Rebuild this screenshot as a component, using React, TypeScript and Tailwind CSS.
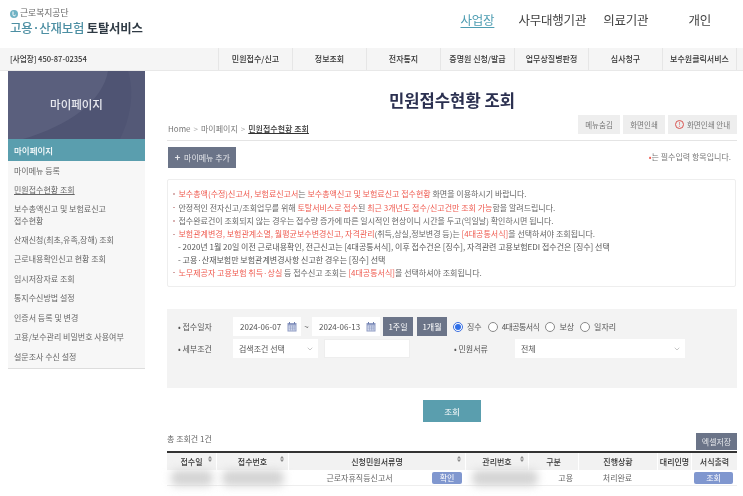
import { ChevronDown, Plus } from "lucide-react";

const font = { fontFamily: '"Noto Sans CJK KR", "Noto Sans", sans-serif' };

const navItems = ["민원접수/신고", "정보조회", "전자통지", "증명원 신청/발급", "업무상질병판정", "심사청구", "보수원클릭서비스"];

const sideItems = [
  "마이메뉴 등록",
  "민원접수현황 조회",
  "보수총액신고 및 보험료신고\n접수현황",
  "산재신청(최초,유족,장해) 조회",
  "근로내용확인신고 현황 조회",
  "임시저장자료 조회",
  "통지수신방법 설정",
  "인증서 등록 및 변경",
  "고용/보수관리 비밀번호 사용여부",
  "설문조사 수신 설정",
];

const R = ({ children }: { children: React.ReactNode }) => <span className="text-[#ef5b50]">{children}</span>;

const Bullet = ({ children }: { children: React.ReactNode }) => (
  <li className="flex items-center h-[13.4px] whitespace-nowrap">
    <span className="w-[1.5px] h-[1.5px] rounded-full bg-[#c99] mr-[4px] shrink-0" />
    <span>{children}</span>
  </li>
);

const CalendarIcon = () => (
  <svg width="10" height="10" viewBox="0 0 10 10" className="shrink-0">
    <rect x="0.5" y="1" width="9" height="8.5" fill="#8f9cc4" />
    <rect x="2" y="0" width="1" height="2" fill="#6f7fae" />
    <rect x="7" y="0" width="1" height="2" fill="#6f7fae" />
    <rect x="1.5" y="3.5" width="7" height="5" fill="#dfe4f2" />
    <path d="M1.5 5h7M1.5 6.8h7M3.5 3.5v5M5.5 3.5v5M7.2 3.5v5" stroke="#8f9cc4" strokeWidth="0.6" />
  </svg>
);

const Radio = ({ checked, label, tight }: { checked?: boolean; label: string; tight?: boolean }) => (
  <span className="flex items-center gap-[4px]">
    <span className={`w-[10px] h-[10px] rounded-full border flex items-center justify-center bg-white ${checked ? "border-[#3b6fe0]" : "border-[#8a8a8a]"}`}>
      {checked && <span className="w-[6px] h-[6px] rounded-full bg-[#2f6fe8]" />}
    </span>
    <span className={tight ? "tracking-[-0.6px]" : ""}>{label}</span>
  </span>
);

const SortHead = ({ className, children, sort = true }: { className: string; children: React.ReactNode; sort?: boolean }) => (
  <div className={`relative flex items-center justify-center h-full bg-[#f2f2f2] font-medium text-[#333] ${className}`}>
    {children}
    {sort && (
      <svg width="4" height="6" viewBox="0 0 4 6" className="absolute right-[4px] top-[3px]">
        <path d="M2 0l2 2.4H0zM2 6L0 3.6h4z" fill="#888" />
      </svg>
    )}
  </div>
);

const Blurred = ({ className }: { className: string }) => (
  <div className={`h-full flex items-center justify-center bg-white ${className}`}>
    <div className="w-[85%] h-[16px] bg-[#d4d4d4] rounded-md blur-[4px]" />
  </div>
);

export default function App() {
  return (
    <div style={font} className="w-[743px] h-[496px] overflow-hidden bg-white text-[#555] text-[8.5px] [filter:blur(0.35px)]">
      <header className="h-[48px] flex justify-between">
        <div className="pl-[10px] pt-[7px]">
          <div className="flex items-center gap-[2px] h-[13px] text-[8.8px] leading-none text-[#666]">
            <svg width="8" height="8" viewBox="0 0 8 8">
              <circle cx="4" cy="4" r="4" fill="#6fb2c4" />
              <path d="M3 1.5v3.2a1.2 1.2 0 0 0 2.4 0" stroke="#fff" fill="none" strokeWidth="1" />
            </svg>
            근로복지공단
          </div>
          <div className="text-[12.4px] leading-[16px] font-medium text-[#4d8fa3] tracking-[-0.2px] whitespace-nowrap">
            고용·산재보험 <span className="text-[#2f3a44] font-semibold">토탈서비스</span>
          </div>
        </div>
        <nav className="flex items-start pt-[11px] text-[12.5px] leading-[17px] text-[#444] whitespace-nowrap tracking-[-0.2px]">
          <a className="text-[#4e9db2] underline underline-offset-2">사업장</a>
          <a className="ml-[24px]">사무대행기관</a>
          <a className="ml-[17px]">의료기관</a>
          <a className="ml-[40px] mr-[32px]">개인</a>
        </nav>
      </header>

      <div className="h-[23px] bg-[#f5f5f5] border-b border-[#e8e8e8] flex items-center">
        <div className="w-[218px] pl-[10px] text-[7.6px] text-[#333] font-medium whitespace-nowrap">[사업장] 450-87-02354</div>
        {navItems.map(n => (
          <div key={n} className="w-[74px] h-full flex items-center justify-center border-l border-[#e6e6e6] text-[8px] font-medium text-[#333] whitespace-nowrap">{n}</div>
        ))}
        <div className="w-[7px] h-full border-l border-[#e6e6e6]" />
      </div>

      <div className="flex">
        <aside className="w-[137px] ml-[8px] shrink-0">
          <div className="relative h-[68px] bg-[#4f5473] flex items-center justify-center overflow-hidden">
            <svg className="absolute inset-0" width="137" height="68" viewBox="0 0 137 68">
              <path d="M0 0h100c-5 30-40 55-85 68H0z" fill="#5a5f7d" />
              <path d="M120 0h17v68h-25c10-20 15-45 8-68z" fill="#545977" />
            </svg>
            <span className="relative text-[11.5px] font-medium text-[#e8e9ef]">마이페이지</span>
          </div>
          <div className="h-[22px] bg-[#5a9eae] flex items-center pl-[6px] text-[8.5px] font-medium text-white">마이페이지</div>
          <ul className="bg-[#f7f7f7] border-b border-[#ddd] pl-[6px] pb-[1px] text-[8px] text-[#666]">
            {sideItems.map(s => (
              <li key={s} className={`flex items-center whitespace-pre-line leading-[12px] ${s.includes("\n") ? "h-[30px]" : "h-[19.5px]"}`}>
                <span className={s === "민원접수현황 조회" ? "underline underline-offset-1" : ""}>{s}</span>
              </li>
            ))}
          </ul>
        </aside>

        <main className="ml-[22px] w-[570px]">
          <h1 className="pt-[18px] h-[44px] text-center text-[16.6px] leading-[22px] font-bold text-[#2b3050] whitespace-nowrap">민원접수현황 조회</h1>
          <div className="h-[26px] flex items-start justify-between border-b border-[#e4e4e4]">
            <div className="flex items-center gap-[3px] h-[25px] pt-[2px] pl-[1px] text-[8px] text-[#777] whitespace-nowrap">
              <span>Home</span><span className="text-[#aaa]">&gt;</span><span>마이페이지</span><span className="text-[#aaa]">&gt;</span>
              <span className="font-medium text-[#333] underline underline-offset-1">민원접수현황 조회</span>
            </div>
            <div className="flex gap-[3px] text-[7.5px] text-[#777]">
              <button className="w-[42px] h-[19px] bg-[#eee]">메뉴숨김</button>
              <button className="w-[42px] h-[19px] bg-[#eee]">화면인쇄</button>
              <button className="w-[69px] h-[19px] bg-[#eee] flex items-center justify-center gap-[3px]">
                <span className="w-[9px] h-[9px] rounded-full border border-[#d9534f] text-[#d9534f] text-[7px] leading-none flex items-center justify-center">!</span>
                화면인쇄 안내
              </button>
            </div>
          </div>
          <div className="flex justify-between mt-[6px]">
            <button className="ml-[1px] w-[68px] h-[21px] bg-[#6b7488] text-[#e4e6ea] text-[8px] flex items-center justify-center gap-[3px]">
              <Plus size={7} strokeWidth={4} />마이메뉴 추가
            </button>
            <div className="pt-[4px] pr-[6px] text-[8px] text-[#777]"><span className="text-[#ef5b50]">•</span>는 필수입력 항목입니다.</div>
          </div>

          <ul className="mt-[11px] h-[108px] w-[569px] border border-[#eee] rounded-[2px] pt-[7.5px] pl-[5px] text-[8px] text-[#666] overflow-hidden">
            <Bullet><R>보수총액(수정)신고서, 보험료신고서</R>는 <R>보수총액신고 및 보험료신고 접수현황</R> 화면을 이용하시기 바랍니다.</Bullet>
            <Bullet>안정적인 전자신고/조회업무를 위해 <R>토탈서비스로 접수</R>된 <R>최근 3개년도 접수/신고건만 조회 가능</R>함을 알려드립니다.</Bullet>
            <Bullet>접수완료건이 조회되지 않는 경우는 접수량 증가에 따른 일시적인 현상이니 시간을 두고(익일날) 확인하시면 됩니다.</Bullet>
            <Bullet><R>보험관계변경, 보험관계소멸, 월평균보수변경신고, 자격관리</R>(취득,상실,정보변경 등)는 <R>[4대공통서식]</R>을 선택하셔야 조회됩니다.</Bullet>
            <li className="h-[12.4px] flex items-center whitespace-nowrap text-[#555] pl-[5px]">- 2020년 1월 20일 이전 근로내용확인, 전근신고는 [4대공통서식], 이후 접수건은 [징수], 자격관련 고용보험EDI 접수건은 [징수] 선택</li>
            <li className="h-[12.4px] flex items-center whitespace-nowrap text-[#555] pl-[5px]">- 고용·산재보험만 보험관계변경사항 신고한 경우는 [징수] 선택</li>
            <Bullet><R>노무제공자 고용보험 취득·상실</R> 등 접수신고 조회는 <R>[4대공통서식]</R>을 선택하셔야 조회됩니다.</Bullet>
          </ul>

          <section className="mt-[22px] h-[79px] w-[570px] bg-[#f3f3f3] pt-[8px] pl-[11px] text-[8px] text-[#555]">
            <div className="flex items-center h-[19px]">
              <span className="w-[55px]">• 접수일자</span>
              <span className="w-[68px] h-[19px] bg-white flex items-center justify-between pl-[7px] pr-[4px]">2024-06-07 <CalendarIcon /></span>
              <span className="w-[11px] text-center">~</span>
              <span className="w-[68px] h-[19px] bg-white flex items-center justify-between pl-[7px] pr-[4px]">2024-06-13 <CalendarIcon /></span>
              <span className="ml-[3px] w-[30px] h-[19px] bg-[#6b7488] text-white flex items-center justify-center">1주일</span>
              <span className="ml-[4px] w-[30px] h-[19px] bg-[#6b7488] text-white flex items-center justify-center">1개월</span>
              <span className="ml-[6px] flex gap-[6px]">
                <Radio checked label="징수" />
                <Radio label="4대공통서식" tight />
                <Radio label="보상" />
                <Radio label="일자리" />
              </span>
            </div>
            <div className="flex items-center h-[19px] mt-[3px]">
              <span className="w-[55px]">• 세부조건</span>
              <span className="w-[85px] h-[19px] bg-white flex items-center justify-between pl-[6px] pr-[4px]">검색조건 선택 <ChevronDown size={8} className="text-[#aaa]" /></span>
              <span className="ml-[6px] w-[86px] h-[19px] bg-white border border-[#eee]" />
              <span className="ml-[44px] w-[61px]">• 민원서류</span>
              <span className="w-[170px] h-[19px] bg-white flex items-center justify-between pl-[6px] pr-[4px]">전체 <ChevronDown size={8} className="text-[#aaa]" /></span>
            </div>
          </section>

          <div className="mt-[12px] flex justify-center">
            <button className="w-[58px] h-[22px] bg-[#5a9eae] text-white text-[8.5px]">조회</button>
          </div>

          <div className="mt-[11px] flex items-end justify-between h-[18px]">
            <span className="pb-[6px] text-[8px] text-[#666]">총 조회건 1건</span>
            <button className="w-[41px] h-[17px] mb-[1px] bg-[#6b7488] text-[#e4e6ea] text-[8px]">엑셀저장</button>
          </div>

          <div className="border-t-2 border-[#333] text-[8px]">
            <div className="flex h-[17px] gap-px">
              <SortHead className="w-[49px]">접수일</SortHead>
              <SortHead className="w-[71px]">접수번호</SortHead>
              <SortHead className="w-[176px]">신청민원서류명</SortHead>
              <SortHead className="w-[62px]">관리번호</SortHead>
              <SortHead className="w-[49px]" sort={false}>구분</SortHead>
              <SortHead className="w-[78px]" sort={false}>진행상황</SortHead>
              <SortHead className="w-[33px]" sort={false}>대리인명</SortHead>
              <SortHead className="w-[45px]" sort={false}>서식출력</SortHead>
            </div>
            <div className="flex h-[16px] border-b border-[#eee] text-[#666]">
              <Blurred className="w-[50px]" />
              <Blurred className="w-[72px]" />
              <div className="w-[177px] flex items-center justify-center relative h-full pr-[36px] whitespace-nowrap">
                근로자휴직등신고서
                <span className="absolute right-[4px] top-[2px] w-[30px] h-[12px] rounded-[2px] bg-[#8097cf] text-white flex items-center justify-center">확인</span>
              </div>
              <Blurred className="w-[78px]" />
              <div className="w-[34px] flex items-center justify-end pr-[5px]">고용</div>
              <div className="w-[79px] flex items-center justify-center">처리완료</div>
              <div className="w-[34px]" />
              <div className="w-[45px] flex items-center justify-center">
                <span className="w-[39px] h-[12px] rounded-[2px] bg-[#8097cf] text-white flex items-center justify-center">조회</span>
              </div>
            </div>
          </div>
        </main>
      </div>
    </div>
  );
}
